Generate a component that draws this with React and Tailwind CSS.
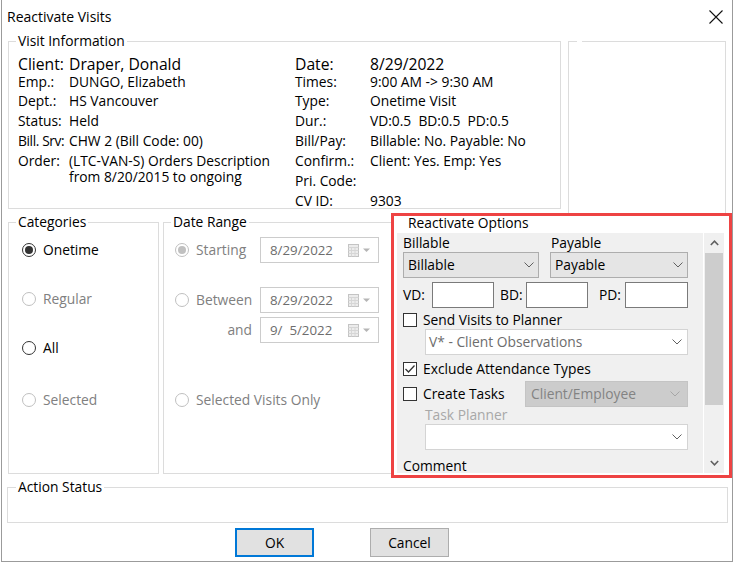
import React from 'react'

function GroupBox({ title, className = '', legendClass = 'ml-[7px]', children }) {
  return (
    <fieldset className={`border border-[#dcdcdc] ${className}`}>
      <legend className={`${legendClass} px-[2px] leading-[16px]`}>{title}</legend>
      {children}
    </fieldset>
  )
}

function Chevron({ color = '#606060' }) {
  return (
    <svg width="10" height="6" viewBox="0 0 10 6">
      <path d="M0.5 0.5 L5 5 L9.5 0.5" fill="none" stroke={color} strokeWidth="1" />
    </svg>
  )
}

function Radio({ checked, disabled, label }) {
  const ring = disabled ? 'border-[#c0c0c0]' : 'border-[#333333]'
  const dot = disabled ? 'bg-[#c0c0c0]' : 'bg-[#333333]'
  const text = disabled ? 'text-[#808080]' : 'text-black'
  return (
    <div className="flex items-center gap-[7px] h-[20px]">
      <span className={`w-[14px] h-[14px] rounded-full border ${ring} bg-white flex items-center justify-center`}>
        {checked && <span className={`w-[8px] h-[8px] rounded-full ${dot}`} />}
      </span>
      <span className={`${text} leading-[16px] whitespace-nowrap`}>{label}</span>
    </div>
  )
}

function Checkbox({ checked, label }) {
  return (
    <div className="flex items-center gap-[6px] h-[18px]">
      <span className="w-[14px] h-[14px] border border-[#333333] bg-white flex items-center justify-center">
        {checked && (
          <svg width="12" height="12" viewBox="0 0 12 12">
            <path d="M1.5 6 L4.5 9 L10.5 2.5" fill="none" stroke="#333" strokeWidth="1.3" />
          </svg>
        )}
      </span>
      <span className="leading-[16px] whitespace-nowrap">{label}</span>
    </div>
  )
}

function Select({ value, className = '', tone = 'combo' }) {
  const styles = {
    combo: 'bg-[#e5e5e5] border-[#adadad] text-black pl-[4px] pr-[4px]',
    white: 'bg-white border-[#d4d4d4] text-[#6d6d6d] pl-[3px] pr-[5px]',
    disabled: 'bg-[#cccccc] border-[#c4c4c4] text-[#838383] pl-[5px] pr-[7px]',
  }
  return (
    <div className={`flex items-center h-[26px] border ${styles[tone]} ${className}`}>
      <span className="flex-1 leading-[16px] whitespace-nowrap">{value}</span>
      <Chevron color={tone === 'disabled' ? '#a6a6a6' : '#606060'} />
    </div>
  )
}

function DateBox({ value }) {
  return (
    <div className="flex items-center w-[119px] h-[26px] border border-[#cccccc] bg-white pl-[9px] pr-[7px]">
      <span className="flex-1 text-[#6d6d6d] text-[13.3px] leading-[16px] whitespace-pre">{value}</span>
      <svg width="11" height="13" viewBox="0 0 11 13">
        <rect x="0.5" y="0.5" width="10" height="12" fill="#ececec" stroke="#c4c4c4" />
        <path d="M0.5 3.5H10.5M0.5 6.5H10.5M0.5 9.5H10.5M3.5 3.5V12.5M7 3.5V12.5" stroke="#d6d6d6" />
      </svg>
      <svg width="9" height="5" viewBox="0 0 9 5" className="ml-[3px]">
        <path d="M1 0.5H8L4.5 4Z" fill="#b5b5b5" />
      </svg>
    </div>
  )
}

function InfoRow({ label, value, labelW, h, big, tight, children }) {
  return (
    <div className={`flex ${h} items-center whitespace-nowrap ${big ? 'text-[15.7px]' : ''}`}>
      <span className={`${labelW} shrink-0 leading-[16px] ${tight ? 'tracking-[-0.4px]' : ''}`}>{label}</span>
      {children || <span className="leading-[16px]">{value}</span>}
    </div>
  )
}

export default function App() {
  return (
    <div className="w-[734px] h-[563px] bg-white font-['Open_Sans','Noto_Sans',sans-serif] text-[13.8px] text-black">
      <div className="ml-[1px] w-[732px] h-[562px] border-x border-b border-[#9b9b9b] bg-white">

        {/* ── Title bar ── */}
        <div className="flex items-center justify-between h-[33px] pl-[5px] pr-[9px]">
          <span className="leading-[16px] text-[14px]">Reactivate Visits</span>
          <svg width="14" height="14" viewBox="0 0 14 14">
            <path d="M0.5 0.5 L13.5 13.5 M13.5 0.5 L0.5 13.5" stroke="#111" strokeWidth="1.1" />
          </svg>
        </div>

        {/* ── Visit information ── */}
        <div className="flex items-start h-[180px] pl-[6px] gap-[7px]">
          <GroupBox title="Visit Information" className="w-[553px] h-[176px]">
            <div className="flex mt-[7px] pl-[9px]">
              <div className="w-[277px]">
                <InfoRow label="Client:" value="Draper, Donald" labelW="w-[51px]" h="h-[16px]" big />
                <InfoRow label="Emp.:" value="DUNGO, Elizabeth" labelW="w-[51px]" h="h-[19px]" />
                <InfoRow label="Dept.:" value="HS Vancouver" labelW="w-[51px]" h="h-[20px]" />
                <InfoRow label="Status:" value="Held" labelW="w-[51px]" h="h-[20px]" />
                <InfoRow label="Bill. Srv:" value="CHW 2 (Bill Code: 00)" labelW="w-[51px]" h="h-[20px]" tight />
                <div className="flex pt-[2px] leading-[16px] whitespace-nowrap">
                  <span className="w-[51px] shrink-0">Order:</span>
                  <div>
                    <div>(LTC-VAN-S) Orders Description</div>
                    <div>from 8/20/2015 to ongoing</div>
                  </div>
                </div>
              </div>
              <div>
                <InfoRow label="Date:" value="8/29/2022" labelW="w-[75px]" h="h-[16px]" big />
                <InfoRow label="Times:" value="9:00 AM -> 9:30 AM" labelW="w-[75px]" h="h-[19px]" />
                <InfoRow label="Type:" value="Onetime Visit" labelW="w-[75px]" h="h-[20px]" />
                <InfoRow label="Dur.:" labelW="w-[75px]" h="h-[20px]">
                  <span className="leading-[16px] whitespace-pre">VD:0.5  BD:0.5  PD:0.5</span>
                </InfoRow>
                <InfoRow label="Bill/Pay:" value="Billable: No. Payable: No" labelW="w-[75px]" h="h-[20px]" />
                <InfoRow label="Confirm.:" value="Client: Yes. Emp: Yes" labelW="w-[75px]" h="h-[20px]" />
                <InfoRow label="Pri. Code:" value="" labelW="w-[75px]" h="h-[20px]" />
                <InfoRow label="CV ID:" value="9303" labelW="w-[75px]" h="h-[20px]" />
              </div>
            </div>
          </GroupBox>
          <fieldset className="border border-[#dcdcdc] w-[158px] h-[182px]">
            <legend className="ml-[8px] w-[5px] h-[16px]" />
          </fieldset>
        </div>

        {/* ── Categories / Date range / Options ── */}
        <div className="flex items-start pl-[6px]">
          <GroupBox title="Categories" className="mt-[1px] w-[151px] h-[260px]">
            <div className="pl-[13px]">
              <div className="mt-[10px]"><Radio checked label="Onetime" /></div>
              <div className="mt-[29px]"><Radio disabled label="Regular" /></div>
              <div className="mt-[29px]"><Radio label="All" /></div>
              <div className="mt-[32px]"><Radio disabled label="Selected" /></div>
            </div>
          </GroupBox>

          <GroupBox title="Date Range" className="mt-[1px] ml-[4px] w-[229px] h-[260px]">
            <div className="pl-[11px]">
              <div className="flex items-center h-[26px] mt-[7px]">
                <div className="w-[85px]"><Radio checked disabled label="Starting" /></div>
                <DateBox value="8/29/2022" />
              </div>
              <div className="flex items-center h-[26px] mt-[24px]">
                <div className="w-[85px]"><Radio disabled label="Between" /></div>
                <DateBox value="8/29/2022" />
              </div>
              <div className="flex items-center h-[26px] mt-[4px]">
                <div className="w-[85px] text-right pr-[8px] text-[#808080] leading-[16px]">and</div>
                <DateBox value="9/  5/2022" />
              </div>
              <div className="mt-[47px]"><Radio disabled label="Selected Visits Only" /></div>
            </div>
          </GroupBox>

          <div className="relative ml-[-1px] w-[341px] h-[265px] border-[3px] border-[#ee4343] bg-white">
            <div className="pl-[14px] leading-[13px]">Reactivate Options</div>
            <div className="flex mt-[4px] ml-[3px] w-[327px] h-[240px] bg-[#f0f0f0] overflow-hidden">
              <div className="w-[306px] shrink-0 pl-[6px]">
                <div className="grid grid-cols-[136px_138px] gap-x-[11px] pt-[2px]">
                  <span className="leading-[16px]">Billable</span>
                  <span className="leading-[16px] pl-[1px]">Payable</span>
                  <Select value="Billable" className="mt-[1px]" />
                  <Select value="Payable" className="mt-[1px]" />
                </div>

                <div className="flex items-center h-[26px] mt-[4px]">
                  <span className="w-[29px] leading-[16px]">VD:</span>
                  <span className="w-[62px] h-[26px] border border-[#7a7a7a] bg-white" />
                  <span className="ml-[6px] w-[26px] leading-[16px]">BD:</span>
                  <span className="w-[62px] h-[26px] border border-[#7a7a7a] bg-white" />
                  <span className="ml-[11px] w-[26px] leading-[16px]">PD:</span>
                  <span className="w-[63px] h-[26px] border border-[#7a7a7a] bg-white" />
                </div>

                <div className="mt-[3px]"><Checkbox label="Send Visits to Planner" /></div>
                <Select value="V* - Client Observations" tone="white" className="ml-[22px] w-[263px]" />

                <div className="mt-[5px]"><Checkbox checked label="Exclude Attendance Types" /></div>

                <div className="flex items-center h-[26px] mt-[3px]">
                  <div className="w-[122px]"><Checkbox label="Create Tasks" /></div>
                  <Select value="Client/Employee" tone="disabled" className="w-[163px]" />
                </div>

                <div className="pl-[22px] h-[16px] leading-[16px] text-[#a8a8a8]">Task Planner</div>
                <Select value="" tone="white" className="mt-[1px] ml-[22px] w-[263px]" />

                <div className="mt-[8px] leading-[16px]">Comment</div>
              </div>

              {/* scrollbar */}
              <div className="flex flex-col w-[21px] h-full border-l border-white">
                <div className="flex items-center justify-center h-[20px]">
                  <svg width="9" height="6" viewBox="0 0 9 6">
                    <path d="M0.8 5 L4.5 1.2 L8.2 5" fill="none" stroke="#606060" strokeWidth="1.6" />
                  </svg>
                </div>
                <div className="mx-[1px] h-[152px] bg-[#cdcdcd]" />
                <div className="flex-1" />
                <div className="flex items-center justify-center h-[20px]">
                  <svg width="9" height="6" viewBox="0 0 9 6">
                    <path d="M0.8 1 L4.5 4.8 L8.2 1" fill="none" stroke="#606060" strokeWidth="1.6" />
                  </svg>
                </div>
              </div>
            </div>
          </div>
        </div>

        {/* ── Action status ── */}
        <div className="pl-[5px]">
          <GroupBox title="Action Status" className="mt-[1px] w-[721px] h-[44px]" legendClass="ml-[8px]" />
        </div>

        {/* ── Buttons ── */}
        <div className="flex mt-[5px] pl-[233px] gap-[56px]">
          <button className="w-[79px] h-[29px] border-2 border-[#0078d7] bg-[#e1e1e1] leading-[16px]">OK</button>
          <button className="w-[79px] h-[29px] border border-[#adadad] bg-[#e1e1e1] leading-[16px]">Cancel</button>
        </div>
      </div>
    </div>
  )
}
